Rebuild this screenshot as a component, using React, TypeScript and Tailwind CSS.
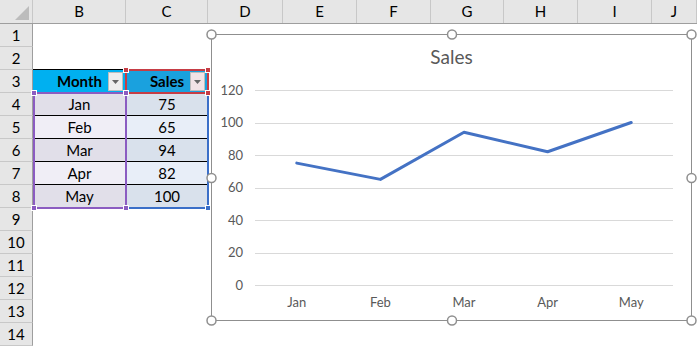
import React from "react";

const cols = ["B", "C", "D", "E", "F", "G", "H", "I", "J"];
const colW = ["w-[93px]", "w-[82px]", "w-[75px]", "w-[74px]", "w-[74px]", "w-[73px]", "w-[74px]", "w-[74px]", "w-[45px]"];

const data: [string, number][] = [
  ["Jan", 75],
  ["Feb", 65],
  ["Mar", 94],
  ["Apr", 82],
  ["May", 100],
];

function DropBtn({ pink }: { pink?: boolean }) {
  return (
    <div
      className={`absolute right-[3px] top-[2px] w-[15px] h-[19px] border border-[#bdbdbd] flex items-center justify-center ${
        pink ? "bg-[#f2e3e6]" : "bg-[#eeeeee]"
      }`}
    >
      <svg width="7" height="4" viewBox="0 0 7 4">
        <path d="M0 0 L7 0 L3.5 4 Z" fill="#666" />
      </svg>
    </div>
  );
}

function Cell({ r, c }: { r: number; c: number }) {
  const w = colW[c];
  let bg = "bg-white";
  let border = "border-b border-transparent";
  let content: React.ReactNode = null;
  if (c === 0 && r === 3) {
    bg = "bg-[#00b0f0]";
    content = (
      <>
        <span className="font-bold">Month</span>
        <DropBtn />
      </>
    );
  } else if (c === 1 && r === 3) {
    bg = "bg-[#1aa1de]";
    content = (
      <>
        <span className="font-bold">Sales</span>
        <DropBtn pink />
      </>
    );
  } else if ((c === 0 || c === 1) && r >= 4 && r <= 8) {
    const dark = r % 2 === 0;
    if (c === 0) bg = dark ? "bg-[#e1dfe9]" : "bg-[#f0eef6]";
    else bg = dark ? "bg-[#d9e1ec]" : "bg-[#e8eef8]";
    content = c === 0 ? data[r - 4][0] : String(data[r - 4][1]);
  }
  if ((c === 0 || c === 1) && r >= 2 && r <= 7) border = "border-b border-black";
  return (
    <div className={`relative h-[23px] ${w} shrink-0 ${bg} ${border} flex items-center justify-center text-[15px] text-black leading-none`}>
      {content}
    </div>
  );
}

function Handle({ x, y, color }: { x: number; y: number; color: string }) {
  return (
    <div
      className="absolute w-[6px] h-[6px] border border-white"
      style={{ left: x - 3, top: y - 3, background: color }}
    />
  );
}

function Chart() {
  const W = 481;
  const H = 287;
  const x0 = 44;
  const x1 = 462;
  const y0 = 251;
  const step = 32.5;
  const cw = (x1 - x0) / 5;
  const pts = data.map(([, v], i) => [x0 + cw * (i + 0.5), y0 - (v / 20) * step]);
  const handles = [
    [0, 0],
    [W / 2, 0],
    [W - 1, 0],
    [0, H / 2],
    [W - 1, H / 2],
    [0, H - 1],
    [W / 2, H - 1],
    [W - 1, H - 1],
  ];
  return (
    <div className="absolute left-[211px] top-[34px] w-[481px] h-[287px]">
      <svg width={W + 10} height={H + 10} className="absolute left-[-5px] top-[-5px] overflow-visible" style={{ fontFamily: "Lato, 'Open Sans', sans-serif" }}>
        <g transform="translate(5,5)">
          <rect x="0.5" y="0.5" width={W - 1} height={H - 1} fill="white" stroke="#8f8f8f" strokeWidth="1" />
          <text x={W / 2} y={30} textAnchor="middle" fontSize="19" fill="#595959">
            Sales
          </text>
          {[0, 1, 2, 3, 4, 5, 6].map((i) => {
            const y = y0 - i * step;
            return (
              <g key={i}>
                <line x1={x0} x2={x1} y1={Math.round(y) + 0.5} y2={Math.round(y) + 0.5} stroke="#d9d9d9" strokeWidth="1" />
                <text x={32} y={y + 4.5} textAnchor="end" fontSize="13" fill="#595959">
                  {i * 20}
                </text>
              </g>
            );
          })}
          {data.map(([m], i) => (
            <text key={m} x={x0 + cw * (i + 0.5)} y={273} textAnchor="middle" fontSize="13" fill="#595959">
              {m}
            </text>
          ))}
          <polyline
            points={pts.map((p) => p.join(",")).join(" ")}
            fill="none"
            stroke="#4472c4"
            strokeWidth="3"
            strokeLinejoin="round"
            strokeLinecap="round"
          />
          {handles.map(([hx, hy], i) => (
            <circle key={i} cx={hx + 0.5} cy={hy + 0.5} r="4.5" fill="white" stroke="#8f8f8f" strokeWidth="1.5" />
          ))}
        </g>
      </svg>
    </div>
  );
}

export default function App() {
  const rows = Array.from({ length: 14 }, (_, i) => i + 1);
  return (
    <div className="relative w-[697px] h-[346px] overflow-hidden bg-white" style={{ fontFamily: "Lato, 'Open Sans', sans-serif" }}>
      <div className="flex h-[24px] bg-[#e6e6e6] border-b border-[#9e9e9e]">
        <div className="w-[33px] shrink-0 border-r border-[#c8c8c8] relative">
          <svg width="14" height="14" className="absolute right-[3px] bottom-[3px]">
            <path d="M14 0 L14 14 L0 14 Z" fill="#bcbcbc" />
          </svg>
        </div>
        {cols.map((c, i) => (
          <div key={c} className={`${colW[i]} shrink-0 border-r border-[#c8c8c8] flex items-center justify-center text-[15px] text-black`}>
            {c}
          </div>
        ))}
      </div>
      {rows.map((r) => (
        <div key={r} className="flex h-[23px]">
          <div className="w-[33px] shrink-0 h-[23px] bg-[#e6e6e6] border-r border-b border-r-[#9e9e9e] border-b-[#c8c8c8] flex items-center justify-center text-[15px] text-black">
            {r}
          </div>
          {cols.map((c, i) => (
            <Cell key={c} r={r} c={i} />
          ))}
        </div>
      ))}

      {/* range highlights */}
      <div className="absolute left-[33px] top-[92px] w-[94px] h-[117px] border-2 border-[#8b5cc1]" />
      <div className="absolute left-[125px] top-[92px] w-[84px] h-[117px] border-2 border-l-0 border-[#3b6fc8]" />
      <div className="absolute left-[125px] top-[92px] w-[2px] h-[117px] bg-[#8b5cc1]" />
      <div className="absolute left-[125px] top-[69px] w-[84px] h-[25px] border-2 border-[#c63d45]" />
      <Handle x={34} y={93} color="#8b5cc1" />
      <Handle x={34} y={208} color="#8b5cc1" />
      <Handle x={126} y={208} color="#8b5cc1" />
      <Handle x={126} y={93} color="#8b5cc1" />
      <Handle x={126} y={70} color="#c63d45" />
      <Handle x={208} y={70} color="#c63d45" />
      <Handle x={208} y={93} color="#c63d45" />
      <Handle x={208} y={208} color="#3b6fc8" />

      <Chart />
    </div>
  );
}
